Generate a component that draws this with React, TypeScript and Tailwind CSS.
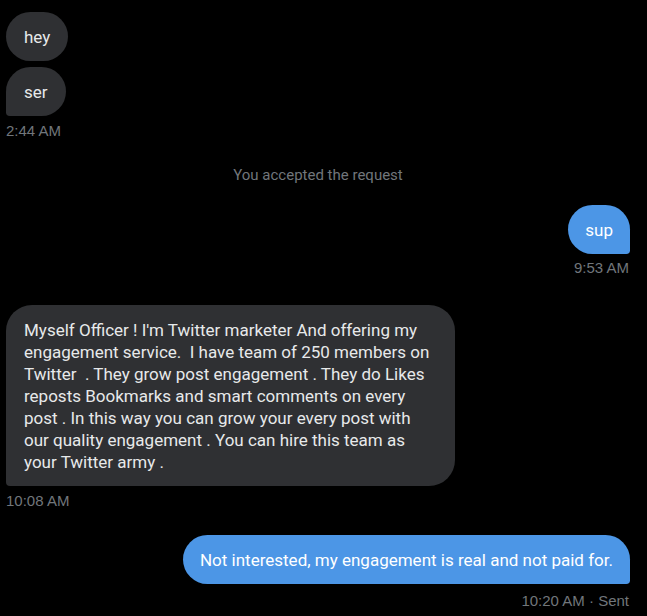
const sans = "font-['Roboto','Liberation_Sans',sans-serif]";

function Received({ children, className = "" }: { children: React.ReactNode; className?: string }) {
  return (
    <div
      className={`self-start rounded-[26px] rounded-bl-[4px] bg-[#2f3033] px-[18px] py-[13.5px] text-[17px] leading-[22px] text-[#e7e9ea] ${className}`}
    >
      {children}
    </div>
  );
}

function Sent({ children, className = "" }: { children: React.ReactNode; className?: string }) {
  return (
    <div
      className={`self-end rounded-[26px] rounded-br-[4px] bg-[#4c96e6] px-[17px] py-[13.5px] text-[17px] leading-[22px] text-white ${className}`}
    >
      {children}
    </div>
  );
}

function Stamp({ children, right, className = "" }: { children: React.ReactNode; right?: boolean; className?: string }) {
  return (
    <div
      className={`font-['Liberation_Sans',Arial,sans-serif] text-[15px] leading-[18px] text-[#71767b] ${
        right ? "self-end pr-px" : "self-start"
      } ${className}`}
    >
      {children}
    </div>
  );
}

const pitch = [
  "Myself Officer ! I'm Twitter marketer And offering my",
  "engagement service.  I have team of 250 members on",
  "Twitter  . They grow post engagement . They do Likes",
  "reposts Bookmarks and smart comments on every",
  "post . In this way you can grow your every post with",
  "our quality engagement . You can hire this team as",
  "your Twitter army .",
];

export default function App() {
  return (
    <div className={`min-h-[616px] w-[647px] bg-black ${sans}`}>
      <div className="flex flex-col pl-[6px] pr-[17px] pt-[12px]">
        <Received className="rounded-bl-[26px]">hey</Received>
        <Received className="mt-[6px] rounded-tl-[26px]">ser</Received>
        <Stamp className="mt-[6px]">2:44 AM</Stamp>

        <div className="mt-[26px] text-center text-[15px] leading-[18px] text-[#71767b]">
          You accepted the request
        </div>

        <Sent className="mt-[21px]">sup</Sent>
        <Stamp right className="mt-[5px]">9:53 AM</Stamp>

        <Received className="mt-[28px] w-[449px]">
          {pitch.map((line) => (
            <span key={line} className="block whitespace-pre">
              {line}
            </span>
          ))}
        </Received>
        <Stamp className="mt-[6px]">10:08 AM</Stamp>

        <Sent className="mt-[25px]">Not interested, my engagement is real and not paid for.</Sent>
        <Stamp right className="mt-[8px]">10:20 AM · Sent</Stamp>
      </div>
    </div>
  );
}
